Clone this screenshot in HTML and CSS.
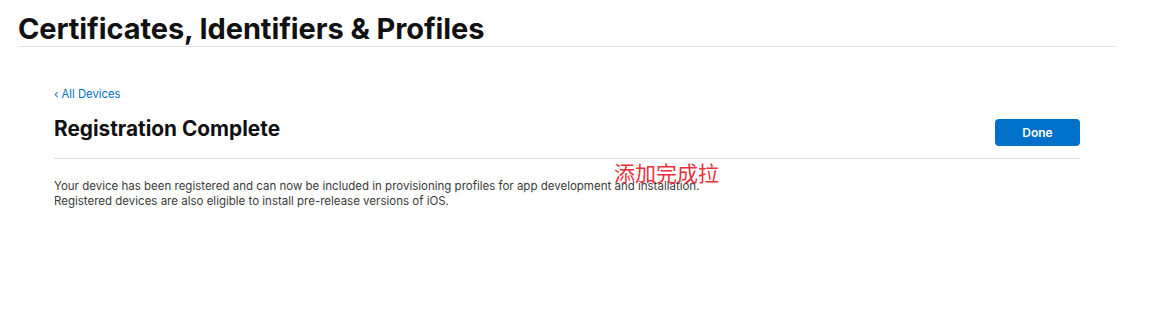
FILE: index.html
```html
<!DOCTYPE html>
<html lang="en">
  <head>
    <meta charset="UTF-8" />
    <meta name="viewport" content="width=device-width, initial-scale=1.0" />
    <title>Certificates, Identifiers &amp; Profiles</title>
    <link rel="stylesheet" href="styles.css">
  </head>
  <body>
    <!-- Page header -->
    <div class="page-header">
      <h1>Certificates, Identifiers &amp; Profiles</h1>
    </div>

    <!-- Main content -->
    <div class="main-content">
      <a href="#" class="back-link">&lsaquo; All Devices</a>

      <div class="title-row">
        <h2>Registration Complete</h2>
        <button class="done-btn">Done</button>
      </div>

      <div class="message">
        <p>Your device has been registered and can now be included in provisioning profiles for app development and installation.</p>
        <p>Registered devices are also eligible to install pre-release versions of iOS.</p>
        <span class="note">添加完成拉</span>
      </div>
    </div>
  </body>
</html>
```

FILE: styles.css
```css
body {
  font-family: Inter, "Noto Sans", Arial, sans-serif;
  margin: 0;
  padding: 0;
  color: #1d1d1f;
  background: #fff;
}

/* Header */
.page-header {
  margin: 0 37px 0 18px;
  border-bottom: 1px solid #e3e3e3;
}

.page-header h1 {
  margin: 0;
  padding-top: 12px;
  font-size: 29px;
  font-weight: 700;
  line-height: 34px;
  letter-spacing: -0.1px;
  color: #111;
}

/* Main content area */
.main-content {
  margin: 0 73px 0 54px;
  padding-top: 40px;
}

.back-link {
  display: block;
  font-size: 11.3px;
  line-height: 14px;
  color: #0070c9;
  text-decoration: none;
}

.title-row {
  display: flex;
  justify-content: space-between;
  align-items: flex-start;
  padding: 15px 0 12px;
  border-bottom: 1px solid #dcdcdc;
}

.title-row h2 {
  margin: 0;
  font-size: 20.8px;
  font-weight: 700;
  line-height: 25px;
  color: #111;
}

.done-btn {
  width: 85px;
  height: 27px;
  margin-top: 3px;
  background-color: #0070c9;
  color: #fff;
  border: none;
  border-radius: 4px;
  font-family: inherit;
  font-size: 12px;
  font-weight: 600;
  cursor: pointer;
}

.message {
  position: relative;
  padding-top: 20px;
}

.message p {
  margin: 0;
  font-size: 11.5px;
  line-height: 15px;
  color: #3a3a3a;
}

/* red annotation on top of the text */
.note {
  position: absolute;
  left: 560px;
  top: 3px;
  font-family: "Noto Sans CJK SC", sans-serif;
  font-size: 21px;
  line-height: 21px;
  color: #e8313a;
}
```
